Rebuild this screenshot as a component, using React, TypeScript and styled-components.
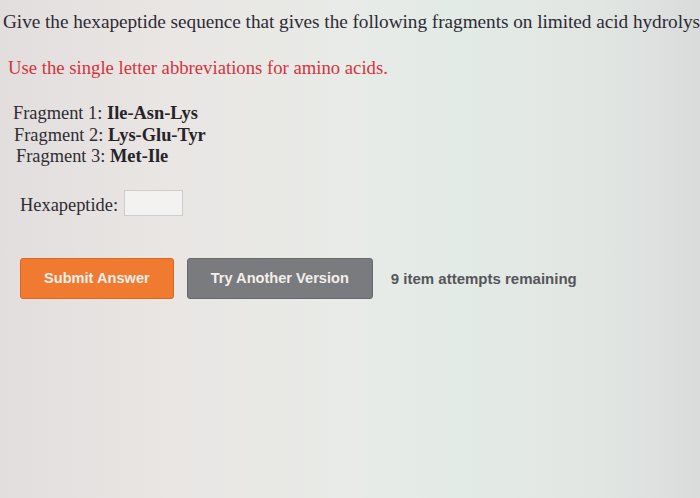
import React from "react";
import styled, {createGlobalStyle} from "styled-components";

const GlobalStyle = createGlobalStyle`
  html, body {
    margin: 0;
    padding: 0;
  }
  body {
    width: 700px;
    height: 498px;
    overflow: hidden;
    background: linear-gradient(90deg, #e2dedd 0%, #e9e6e4 25%, #e8ebe7 50%, #e3ebe6 65%, #e2e6e3 85%, #d9dcdb 100%);
  }
`;

const Page = styled.div`
  height: 498px;
  overflow: hidden;
  font-family: "Liberation Serif", "Times New Roman", serif;
  color: #2f2c33;
  padding-top: 10px;
  box-sizing: border-box;
`;

// the question runs past the right edge of the frame, as on a narrow screen
const QuestionClip = styled.div`
  overflow: hidden;
  width: 700px;
`;

const Question = styled.p`
  margin: 0 0 0 3px;
  font-size: 19.3px;
  letter-spacing: -0.05px;
  line-height: 24px;
  white-space: nowrap;
  color: #2e2b35;
`;

const Hint = styled.p`
  margin: 22px 0 0 8px;
  font-size: 18.7px;
  line-height: 24px;
  color: #d4343c;
`;

const Fragments = styled.div`
  margin: 23px 0 0 13px;
  display: flex;
  flex-direction: column;
`;

const FragmentRow = styled.div<{ $indent: number }>`
  font-size: 18.4px;
  line-height: 21.5px;
  padding-left: ${p => p.$indent}px;
  white-space: nowrap;

  b {
    color: #262329;
  }
`;

const AnswerRow = styled.label`
  margin: 22px 0 0 20px;
  display: flex;
  align-items: center;
  gap: 6px;
  font-size: 18.4px;
`;

const AnswerInput = styled.input`
  width: 59px;
  height: 26px;
  box-sizing: border-box;
  border: 1px solid #cfcdcb;
  background: #f3f2f0;
  margin: 0 0 6px;
  padding: 0;
`;

const Actions = styled.div`
  margin: 36px 0 0 20px;
  display: flex;
  align-items: center;
  gap: 13px;
  font-family: "Liberation Sans", Arial, sans-serif;
`;

const Button = styled.button<{ $variant: "primary" | "secondary" }>`
  height: 41px;
  padding: 0 23px;
  border-radius: 3px;
  border: 1px solid ${p => p.$variant === "primary" ? "#e0651f" : "#68696b"};
  background: ${p => p.$variant === "primary" ? "#f07a2f" : "#7a7b7e"};
  color: #f4efec;
  font-family: inherit;
  font-size: 14.6px;
  font-weight: bold;
  cursor: pointer;
`;

const Remaining = styled.span`
  margin-left: 5px;
  font-size: 15px;
  font-weight: bold;
  color: #55565a;
`;

export default function App() {
  const fragments = [
    {label: "Fragment 1:", seq: "Ile-Asn-Lys", indent: 0},
    {label: "Fragment 2:", seq: "Lys-Glu-Tyr", indent: 1},
    {label: "Fragment 3:", seq: "Met-Ile", indent: 3},
  ];

  return (
    <>
      <GlobalStyle/>
      <Page>
        <QuestionClip>
          <Question>Give the hexapeptide sequence that gives the following fragments on limited acid hydrolysis.</Question>
        </QuestionClip>
        <Hint>Use the single letter abbreviations for amino acids.</Hint>
        <Fragments>
          {fragments.map(f => (
            <FragmentRow key={f.label} $indent={f.indent}>
              {f.label} <b>{f.seq}</b>
            </FragmentRow>
          ))}
        </Fragments>
        <AnswerRow>
          Hexapeptide:
          <AnswerInput type="text"/>
        </AnswerRow>
        <Actions>
          <Button $variant="primary">Submit Answer</Button>
          <Button $variant="secondary">Try Another Version</Button>
          <Remaining>9 item attempts remaining</Remaining>
        </Actions>
      </Page>
    </>
  );
}
